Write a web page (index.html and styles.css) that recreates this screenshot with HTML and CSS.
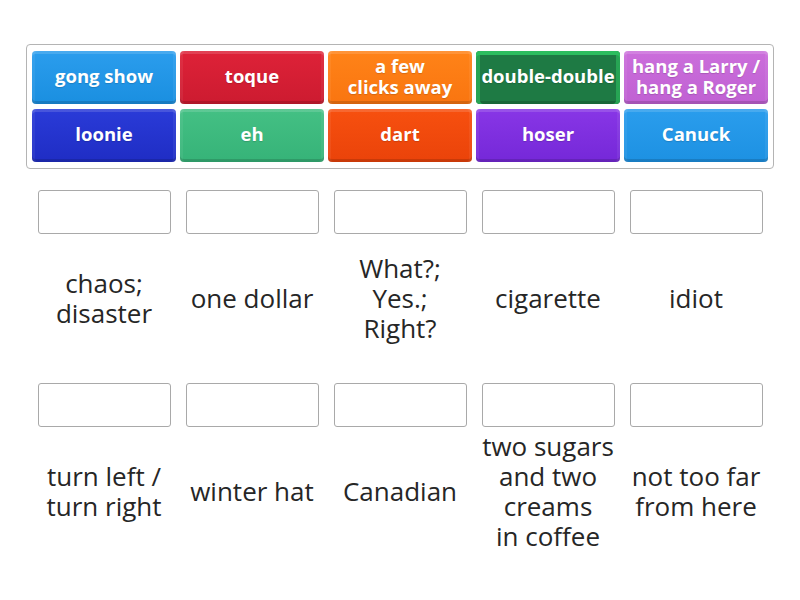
FILE: index.html
```html
<!DOCTYPE html>
<html>
<head>
<meta charset="utf-8">
<link rel="stylesheet" href="styles.css">
</head>
<body>
<div class="page">
  <div class="bank">
    <div class="tile c-blue">gong show</div>
    <div class="tile c-red">toque</div>
    <div class="tile c-orange">a few<br>clicks away</div>
    <div class="tile c-dgreen">double-double</div>
    <div class="tile c-orchid">hang a Larry /<br>hang a Roger</div>
    <div class="tile c-navy">loonie</div>
    <div class="tile c-mint">eh</div>
    <div class="tile c-flame">dart</div>
    <div class="tile c-purple">hoser</div>
    <div class="tile c-sky">Canuck</div>
  </div>
  <div class="targets">
    <div class="slot"><div class="drop"></div><div class="label"><span>chaos;<br>disaster</span></div></div>
    <div class="slot"><div class="drop"></div><div class="label"><span>one dollar</span></div></div>
    <div class="slot"><div class="drop"></div><div class="label"><span>What?;<br>Yes.;<br>Right?</span></div></div>
    <div class="slot"><div class="drop"></div><div class="label"><span>cigarette</span></div></div>
    <div class="slot"><div class="drop"></div><div class="label"><span>idiot</span></div></div>
    <div class="slot"><div class="drop"></div><div class="label"><span>turn left /<br>turn right</span></div></div>
    <div class="slot"><div class="drop"></div><div class="label"><span>winter hat</span></div></div>
    <div class="slot"><div class="drop"></div><div class="label"><span>Canadian</span></div></div>
    <div class="slot"><div class="drop"></div><div class="label"><span>two sugars<br>and two<br>creams<br>in coffee</span></div></div>
    <div class="slot"><div class="drop"></div><div class="label"><span>not too far<br>from here</span></div></div>
  </div>
</div>
</body>
</html>
```

FILE: styles.css
```css
html, body {
  margin: 0;
  padding: 0;
  background: #ffffff;
}
body {
  font-family: "Open Sans", "Liberation Sans", sans-serif;
  width: 800px;
  height: 600px;
  overflow: hidden;
}
.page {
  padding-top: 44px;
  display: flex;
  flex-direction: column;
  align-items: center;
}
.bank {
  width: 736px;
  padding: 6px 5px 6px 5px;
  border: 1px solid #b4b4b4;
  border-radius: 4px;
  display: grid;
  grid-template-columns: repeat(5, 144px);
  grid-auto-rows: 53px;
  column-gap: 4px;
  row-gap: 5px;
  box-sizing: content-box;
}
.tile {
  border-radius: 4px;
  color: #ffffff;
  font-weight: 700;
  font-size: 18.5px;
  line-height: 21px;
  text-align: center;
  display: flex;
  align-items: center;
  justify-content: center;
  padding-bottom: 4px;
  white-space: nowrap;
  box-shadow:
    inset 0 3px 0 rgba(255, 255, 255, 0.14),
    inset 0 -3px 0 rgba(0, 0, 0, 0.14),
    inset 3px 0 0 rgba(255, 255, 255, 0.06),
    inset -3px 0 0 rgba(255, 255, 255, 0.06);
  text-shadow: 0 1px 1px rgba(0, 0, 0, 0.15);
}
.c-blue { background: linear-gradient(#2b9ded, #1a8fe0); }
.c-red { background: linear-gradient(#de2238, #cc1b30); }
.c-orange { background: linear-gradient(#ff8318, #f97510); }
.c-dgreen {
  background: #1e7a44;
  box-shadow:
    inset 0 4px 0 #2cbd5f,
    inset 4px 0 0 #27a454,
    inset -4px 0 0 #27a454,
    inset 0 -3px 0 rgba(0, 0, 0, 0.15);
}
.c-orchid { background: linear-gradient(#cb6edb, #c061d3); }
.c-navy { background: linear-gradient(#2a3bd8, #1f2dc4); }
.c-mint { background: linear-gradient(#44c084, #36b378); }
.c-flame { background: linear-gradient(#f7500f, #ea430a); }
.c-purple { background: linear-gradient(#8836e6, #7528d8); }
.c-sky { background: linear-gradient(#2a9ded, #1d91e2); }
.targets {
  margin-top: 21px;
  width: 740px;
  display: grid;
  grid-template-columns: repeat(5, 148px);
  row-gap: 21px;
}
.slot {
  display: flex;
  flex-direction: column;
  align-items: center;
}
.drop {
  width: 133px;
  height: 44px;
  box-sizing: border-box;
  border: 1px solid #a9a9a9;
  border-radius: 3px;
  background: #ffffff;
}
.label {
  height: 128px;
  width: 148px;
  display: flex;
  align-items: center;
  justify-content: center;
  text-align: center;
  color: #262626;
  font-size: 26px;
  line-height: 30px;
}
```
